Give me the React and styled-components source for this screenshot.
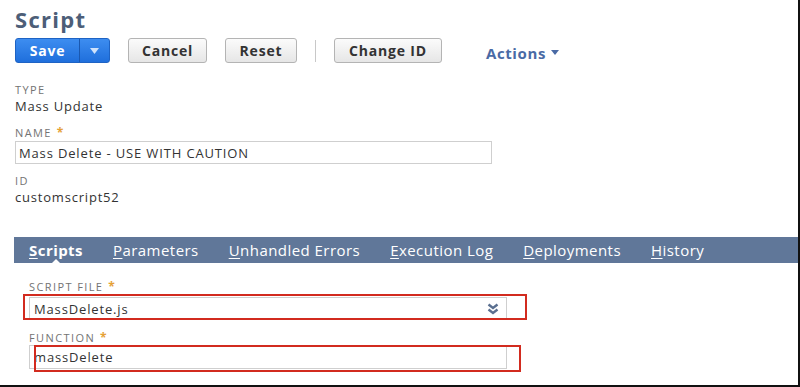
import React from "react";
import styled, { createGlobalStyle } from "styled-components";

const Global = createGlobalStyle`
  html, body { margin: 0; padding: 0; background: #fff; }
  body { font-family: "Open Sans", "Liberation Sans", sans-serif; }
`;

const Page = styled.div`
  width: 800px;
  height: 387px;
  box-sizing: border-box;
  border-right: 2px solid #111;
  border-bottom: 2px solid #111;
  overflow: hidden;
  position: relative;
`;

const Header = styled.div`
  padding-left: 15px;
`;

const Title = styled.h1`
  margin: 4px 0 0;
  font-size: 22px;
  line-height: 30px;
  font-weight: 700;
  letter-spacing: 1.3px;
  color: #4d5e78;
`;

const Toolbar = styled.div`
  display: flex;
  align-items: center;
  margin-top: 4px;
  height: 25px;
`;

const SaveGroup = styled.div`
  display: flex;
  height: 25px;
  width: 95px;
  box-sizing: border-box;
  border: 1px solid #1e63c4;
  border-radius: 3px;
  background: linear-gradient(#3d8df0, #1f6fdc);
  overflow: hidden;
`;

const SaveMain = styled.div`
  flex: 1;
  display: flex;
  align-items: center;
  justify-content: center;
  color: #fff;
  font-weight: 700;
  font-size: 14px;
  letter-spacing: 0.8px;
  border-right: 1px solid #1a58b0;
`;

const SaveArrow = styled.div`
  width: 29px;
  display: flex;
  align-items: center;
  justify-content: center;
`;

const Button = styled.div`
  height: 25px;
  box-sizing: border-box;
  width: ${(p) => p.$w}px;
  margin-left: ${(p) => p.$ml}px;
  display: flex;
  align-items: center;
  justify-content: center;
  border: 1px solid #b4b4b4;
  border-radius: 3px;
  background: linear-gradient(#fbfbfb, #e6e6e6);
  color: #333;
  font-weight: 700;
  font-size: 14px;
  letter-spacing: 0.8px;
`;

const Divider = styled.div`
  width: 1px;
  height: 22px;
  background: #c8c8c8;
  margin-left: 18px;
`;

const Actions = styled.div`
  margin-left: 44px;
  margin-top: 4px;
  color: #4a6aa5;
  font-weight: 700;
  font-size: 15px;
  letter-spacing: 0.6px;
  display: flex;
  align-items: center;
  gap: 5px;
`;

const Label = styled.div`
  font-size: 11px;
  line-height: 15px;
  letter-spacing: 1.4px;
  color: #737373;
  text-transform: uppercase;
  margin-top: ${(p) => p.$mt || 0}px;
  display: flex;
  align-items: center;
  gap: 5px;
`;

const Star = styled.span`
  color: #e5a137;
  font-size: 12px;
  font-weight: 700;
`;

const Value = styled.div`
  font-size: 13px;
  line-height: 18px;
  letter-spacing: 0.8px;
  color: #333;
`;

const Input = styled.div`
  position: relative;
  box-sizing: border-box;
  width: ${(p) => p.$w}px;
  height: ${(p) => p.$h}px;
  margin-top: ${(p) => p.$mt || 0}px;
  border: 1px solid #cfcfcf;
  display: flex;
  align-items: center;
  justify-content: space-between;
  padding: 0 ${(p) => p.$pr || 4}px 0 ${(p) => p.$pl || 4}px;
  font-size: 13px;
  letter-spacing: 0.85px;
  color: #333;
  background: #fff;
`;

const TabBar = styled.div`
  margin-top: 31px;
  margin-left: 14px;
  height: 26px;
  background: #607799;
  display: flex;
  align-items: center;
  gap: 30px;
  padding-left: 15px;
`;

const Tab = styled.div`
  position: relative;
  color: #fff;
  font-size: 15px;
  letter-spacing: 0.45px;
  font-weight: ${(p) => (p.$active ? 700 : 400)};
  height: 26px;
  line-height: 26px;
  u { text-decoration-thickness: 1px; text-underline-offset: 2px; }
`;

const Notch = styled.div`
  position: absolute;
  left: 50%;
  bottom: 0;
  transform: translateX(-50%);
  width: 0;
  height: 0;
  border-left: 4px solid transparent;
  border-right: 4px solid transparent;
  border-bottom: 4px solid #fff;
`;

const Body = styled.div`
  padding-left: 29px;
`;

const Highlight = styled.div`
  position: absolute;
  left: ${(p) => p.$l}px;
  top: ${(p) => p.$t}px;
  right: ${(p) => p.$r}px;
  bottom: ${(p) => p.$b}px;
  border: 2px solid #d22b1f;
  pointer-events: none;
`;

const Chevrons = () => (
  <svg width="14" height="12" viewBox="0 0 14 12">
    <path d="M2.5 1.5 L7 5 L11.5 1.5" fill="none" stroke="#5a6f90" strokeWidth="2.4" />
    <path d="M2.5 6.5 L7 10 L11.5 6.5" fill="none" stroke="#5a6f90" strokeWidth="2.4" />
  </svg>
);

const tabs = [
  ["S", "cripts", true],
  ["P", "arameters"],
  ["U", "nhandled Errors"],
  ["E", "xecution Log"],
  ["D", "eployments"],
  ["H", "istory"],
];

export default function App() {
  return (
    <>
      <Global />
      <Page>
        <Header>
          <Title>Script</Title>
          <Toolbar>
            <SaveGroup>
              <SaveMain>Save</SaveMain>
              <SaveArrow>
                <svg width="9" height="6" viewBox="0 0 9 6">
                  <path d="M0 0 H9 L4.5 6 Z" fill="#cfe2fb" />
                </svg>
              </SaveArrow>
            </SaveGroup>
            <Button $w={79} $ml={18}>Cancel</Button>
            <Button $w={72} $ml={18}>Reset</Button>
            <Divider />
            <Button $w={108} $ml={18}>Change ID</Button>
            <Actions>
              Actions
              <svg width="8" height="5" viewBox="0 0 8 5">
                <path d="M0 0 H8 L4 5 Z" fill="#4a6aa5" />
              </svg>
            </Actions>
          </Toolbar>
          <Label $mt={19}>Type</Label>
          <Value>Mass Update</Value>
          <Label $mt={10}>
            Name <Star>*</Star>
          </Label>
          <Input $w={477} $h={23} $mt={1} $pl={3}>Mass Delete - USE WITH CAUTION</Input>
          <Label $mt={9}>ID</Label>
          <Value>customscript52</Value>
        </Header>
        <TabBar>
          {tabs.map(([first, rest, active]) => (
            <Tab key={first + rest} $active={active}>
              <u>{first}</u>
              {rest}
              {active && <Notch />}
            </Tab>
          ))}
        </TabBar>
        <Body>
          <Label $mt={16}>
            Script File <Star>*</Star>
          </Label>
          <Input $w={478} $h={23} $mt={3} $pr={6}>
            MassDelete.js
            <Chevrons />
            <Highlight $l={-7} $t={-4} $r={-21} $b={-1} />
          </Input>
          <Label $mt={10}>
            Function <Star>*</Star>
          </Label>
          <Input $w={478} $h={24} $mt={0}>
            massDelete
            <Highlight $l={4} $t={-1} $r={-15} $b={-4} />
          </Input>
        </Body>
      </Page>
    </>
  );
}
